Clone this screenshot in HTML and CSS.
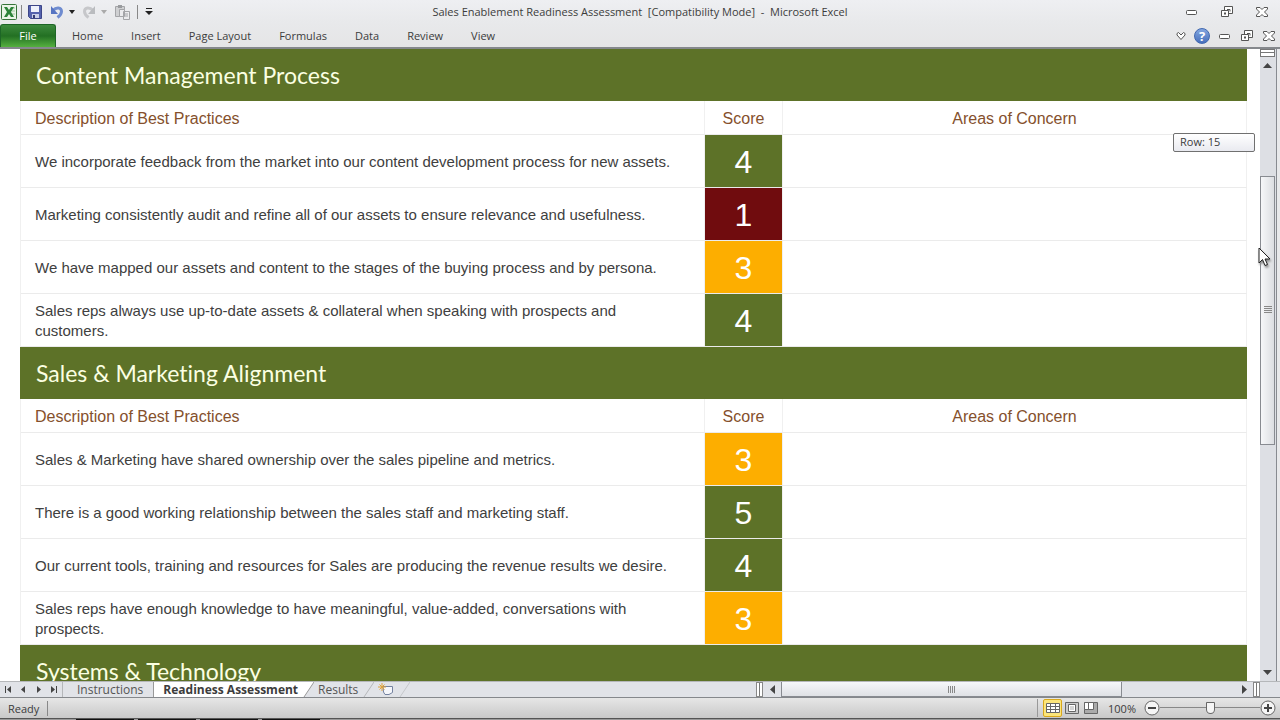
FILE: index.html
```html
<!DOCTYPE html>
<html lang="en">
<head>
  <meta charset="UTF-8">
  <meta name="viewport" content="width=device-width, initial-scale=1.0">
  <title>Sales Enablement Readiness Assessment</title>
  <link rel="stylesheet" href="styles.css">
</head>
<body>
  <!-- Shared icons -->
  <svg class="sprite" aria-hidden="true">
    <symbol id="minimize" viewBox="0 0 14 12"><rect x="1.5" y="4.5" width="10" height="4" rx="1" fill="#fff" stroke="#555"/></symbol>
    <symbol id="restore" viewBox="0 0 14 12">
      <path d="M4.500 .5h8v7h-8z" fill="#fff" stroke="#555"/>
      <path d="M1.500 4.500h7v6h-7z" fill="#fff" stroke="#555"/>
      <path d="M4 7.500h2" stroke="#555" stroke-width="2"/>
      <path d="M7 3.500h3v2" fill="none" stroke="#555"/>
    </symbol>
    <symbol id="close" viewBox="0 0 14 12"><path d="M1.500 1.500h3.500l2 2 2-2h3.500v1.500l-3 3 3 3v1.500H9l-2-2-2 2H1.500V9l3-3-3-3z" fill="#fff" stroke="#555"/></symbol>
  </svg>

  <!-- Title bar -->
  <header class="title-bar">
    <div class="quick-access">
      <svg width="18" height="18" viewBox="0 0 18 18">
        <rect x="1.500" y="1.500" width="15" height="15" rx="1" fill="#e9f4e7" stroke="#37743a"/>
        <path d="M12 5h3M12 8h3M12 11h3" stroke="#9fc79d"/>
        <path d="M4 4h3l2 3 2-3h3l-3 5 3 5h-3l-2-3-2 3H4l3-5z" fill="#2c8339"/>
      </svg>
      <span class="separator first"></span>
      <button type="button" aria-label="Save">
        <svg width="16" height="16" viewBox="0 0 16 16">
          <path d="M1.500 1.500h13v13h-11l-2-2z" fill="#5462ad" stroke="#3d4688"/>
          <path d="M4 2h8v6H4z" fill="#eef1fb"/>
          <path d="M5 10h7v4H5z" fill="#c9cfe8"/>
          <path d="M6 11h2v3H6z" fill="#343b70"/>
        </svg>
      </button>
      <button type="button" class="undo" aria-label="Undo">
        <svg width="14" height="14" viewBox="0 0 14 14">
          <path d="M3 5.500C6 2 11.500 2 11.500 6.500c0 3-2 4.500-4 6" fill="none" stroke="#6f8cd0" stroke-width="3"/>
          <path d="M1 1v8h7z" fill="#5674c2"/>
        </svg>
        <svg width="6" height="4" viewBox="0 0 6 4"><path d="M0 0h6L3 4z" fill="#222"/></svg>
      </button>
      <button type="button" class="undo" aria-label="Redo">
        <svg width="14" height="14" viewBox="0 0 14 14">
          <path d="M11 5.500C8 2 2.500 2 2.500 6.500c0 3 2 4.500 4 6" fill="none" stroke="#c6c7ca" stroke-width="3"/>
          <path d="M13 1v8H6z" fill="#babcbf"/>
        </svg>
        <svg width="6" height="4" viewBox="0 0 6 4"><path d="M0 0h6L3 4z" fill="#aaa"/></svg>
      </button>
      <button type="button" aria-label="Paste">
        <svg width="16" height="16" viewBox="0 0 16 16">
          <path d="M1.500 2.500h9v10h-9z" fill="#cfd0d2" stroke="#a4a5a8"/>
          <path d="M4 1h4v3H4z" fill="#999b9e"/>
          <path d="M5.500 5.500h5v7h-5zM9.500 7.500h6v8h-6z" fill="#ececee" stroke="#a4a5a8"/>
          <path d="M11 10h3M11 12h3" stroke="#a4a5a8"/>
        </svg>
      </button>
      <span class="separator"></span>
      <button type="button" aria-label="Customize Quick Access Toolbar">
        <svg width="8" height="7" viewBox="0 0 8 7"><path d="M1 .5h6" stroke="#222"/><path d="M0 3h8L4 7z" fill="#222"/></svg>
      </button>
    </div>
    <h1>Sales Enablement Readiness Assessment&nbsp; [Compatibility Mode]&nbsp; -&nbsp; Microsoft Excel</h1>
    <div class="window-buttons">
      <button type="button" aria-label="Minimize"><svg width="14" height="12"><use href="#minimize"/></svg></button>
      <button type="button" aria-label="Restore"><svg width="14" height="12"><use href="#restore"/></svg></button>
      <button type="button" aria-label="Close"><svg width="14" height="12"><use href="#close"/></svg></button>
    </div>
  </header>

  <!-- Ribbon tabs -->
  <nav class="ribbon">
    <button type="button" class="file-tab">File</button>
    <div class="ribbon-tabs">
      <button type="button">Home</button>
      <button type="button">Insert</button>
      <button type="button">Page Layout</button>
      <button type="button">Formulas</button>
      <button type="button">Data</button>
      <button type="button">Review</button>
      <button type="button">View</button>
    </div>
    <div class="workbook-buttons">
      <button type="button" aria-label="Expand the Ribbon"><svg width="10" height="10" viewBox="0 0 10 10"><path d="M1 2.500 2.500 1.500 5 4l2.500-2.500L9 2.500V4L5 8.500 1 4z" fill="#fff" stroke="#555"/></svg></button>
      <button type="button" class="help" aria-label="Help">?</button>
      <button type="button" aria-label="Minimize workbook"><svg width="14" height="12"><use href="#minimize"/></svg></button>
      <button type="button" aria-label="Restore workbook"><svg width="14" height="12"><use href="#restore"/></svg></button>
      <button type="button" aria-label="Close workbook"><svg width="14" height="12"><use href="#close"/></svg></button>
    </div>
  </nav>

  <main class="workspace">
    <div class="sheet">
      <section>
        <h2>Content Management Process</h2>
        <table>
          <thead>
            <tr><th class="practice">Description of Best Practices</th><th class="score">Score</th><th class="concern">Areas of Concern</th></tr>
          </thead>
          <tbody>
            <tr><td>We incorporate feedback from the market into our content development process for new assets.</td><td class="score green">4</td><td></td></tr>
            <tr><td>Marketing consistently audit and refine all of our assets to ensure relevance and usefulness.</td><td class="score red">1</td><td></td></tr>
            <tr><td>We have mapped our assets and content to the stages of the buying process and by persona.</td><td class="score orange">3</td><td></td></tr>
            <tr><td>Sales reps always use up-to-date assets &amp; collateral when speaking with prospects and customers.</td><td class="score green">4</td><td></td></tr>
          </tbody>
        </table>
      </section>

      <section>
        <h2>Sales &amp; Marketing Alignment</h2>
        <table>
          <thead>
            <tr><th class="practice">Description of Best Practices</th><th class="score">Score</th><th class="concern">Areas of Concern</th></tr>
          </thead>
          <tbody>
            <tr><td>Sales &amp; Marketing have shared ownership over the sales pipeline and metrics.</td><td class="score orange">3</td><td></td></tr>
            <tr><td>There is a good working relationship between the sales staff and marketing staff.</td><td class="score green">5</td><td></td></tr>
            <tr><td>Our current tools, training and resources for Sales are producing the revenue results we desire.</td><td class="score green">4</td><td></td></tr>
            <tr><td>Sales reps have enough knowledge to have meaningful, value-added, conversations with prospects.</td><td class="score orange">3</td><td></td></tr>
          </tbody>
        </table>
      </section>

      <section>
        <h2>Systems &amp; Technology</h2>
      </section>
    </div>

    <!-- Vertical scroll bar -->
    <div class="v-scroll">
      <span class="v-split"></span>
      <button type="button" aria-label="Scroll up"><svg width="9" height="5" viewBox="0 0 9 5"><path d="M0 5h9L4.500 0z" fill="#444"/></svg></button>
      <div class="v-track">
        <div class="v-thumb"><svg width="8" height="8" viewBox="0 0 8 8"><path d="M0 .5h8M0 2.500h8M0 4.500h8M0 6.500h8" stroke="#888"/></svg></div>
      </div>
      <button type="button" aria-label="Scroll down"><svg width="9" height="5" viewBox="0 0 9 5"><path d="M0 0h9L4.500 5z" fill="#444"/></svg></button>
    </div>
    <div class="row-tip">Row: 15</div>
    <svg class="cursor" width="13" height="20" viewBox="0 0 13 20"><path d="M1 1v15l3.500-3.500L7 18.500l2.500-1L7 12h5z" fill="#fff" stroke="#222"/></svg>
  </main>

  <!-- Sheet tabs and horizontal scroll bar -->
  <div class="sheet-bar">
    <div class="sheet-nav">
      <button type="button" aria-label="First sheet"><svg width="7" height="7" viewBox="0 0 7 7"><path d="M.5 0v7" stroke="#444"/><path d="M6 0v7L2 3.500z" fill="#444"/></svg></button>
      <button type="button" aria-label="Previous sheet"><svg width="7" height="7" viewBox="0 0 7 7"><path d="M5 0v7L1 3.500z" fill="#444"/></svg></button>
      <button type="button" aria-label="Next sheet"><svg width="7" height="7" viewBox="0 0 7 7"><path d="M2 0v7l4-3.500z" fill="#444"/></svg></button>
      <button type="button" aria-label="Last sheet"><svg width="7" height="7" viewBox="0 0 7 7"><path d="M6.500 0v7" stroke="#444"/><path d="M1 0v7l4-3.500z" fill="#444"/></svg></button>
    </div>
    <div class="sheet-tabs">
      <button type="button">Instructions</button>
      <button type="button" class="active">Readiness Assessment</button>
      <svg class="slant" width="12" height="16" viewBox="0 0 12 16"><path d="M0 0h12L2 15H0z" fill="#fff"/><path d="M12 0 2 15" stroke="#999"/></svg>
      <button type="button" class="results">Results</button>
      <svg class="slant" width="12" height="16" viewBox="0 0 12 16"><path d="M12 0 2 15" stroke="#b5b7ba"/></svg>
      <button type="button" class="new-sheet" aria-label="Insert Worksheet">
        <svg width="16" height="13" viewBox="0 0 16 13">
          <path d="M5 3.500h9.500v6L11 11.500H7L5.500 9z" fill="#f5f6fa" stroke="#7482a0"/>
          <path d="M4 0v8M0 4h8M1.500 1.500l5 5M6.500 1.500l-5 5" stroke="#dfa33c"/>
        </svg>
      </button>
      <svg class="slant" width="12" height="16" viewBox="0 0 12 16"><path d="M12 0 2 15" stroke="#c5c7cb"/></svg>
    </div>
    <div class="h-scroll">
      <span class="h-split"></span>
      <button type="button" aria-label="Scroll left"><svg width="5" height="9" viewBox="0 0 5 9"><path d="M5 0v9L0 4.500z" fill="#444"/></svg></button>
      <div class="h-track">
        <div class="h-thumb"><svg width="8" height="7" viewBox="0 0 8 7"><path d="M.5 0v7M2.500 0v7M4.500 0v7M6.500 0v7" stroke="#888"/></svg></div>
      </div>
      <button type="button" aria-label="Scroll right"><svg width="5" height="9" viewBox="0 0 5 9"><path d="M0 0v9l5-4.500z" fill="#444"/></svg></button>
      <span class="h-split"></span>
    </div>
  </div>

  <!-- Status bar -->
  <footer class="status-bar">
    <span class="ready">Ready</span>
    <div class="view-buttons">
      <button type="button" class="active" aria-label="Normal"><svg width="14" height="12" viewBox="0 0 14 12"><path d="M.5 1.500h13v9H.5zM.5 4.500h13M.5 7.500h13M4.500 1.500v9M9.500 1.500v9" fill="#fff" stroke="#666"/></svg></button>
      <button type="button" aria-label="Page Layout"><svg width="14" height="12" viewBox="0 0 14 12"><path d="M.5 .5h13v11H.5z" fill="#ccc" stroke="#666"/><path d="M3.500 2.500h7v7h-7z" fill="#fff" stroke="#666"/><path d="M5 5h4M5 7h4" stroke="#aaa"/></svg></button>
      <button type="button" aria-label="Page Break Preview"><svg width="14" height="12" viewBox="0 0 14 12"><path d="M.5 .5h13v11H.5z" fill="#aaa" stroke="#666"/><path d="M.5 .5h4v7h-4zM4.500 .5h5v7h-5z" fill="#fff" stroke="#666"/></svg></button>
    </div>
    <span class="zoom-level">100%</span>
    <button type="button" aria-label="Zoom out"><svg width="16" height="16" viewBox="0 0 16 16"><circle cx="8" cy="8" r="7" fill="#f5f5f5" stroke="#666"/><path d="M4 8h8" stroke="#444" stroke-width="2"/></svg></button>
    <input type="range" min="0" max="100" value="50" aria-label="Zoom">
    <button type="button" aria-label="Zoom in"><svg width="16" height="16" viewBox="0 0 16 16"><circle cx="8" cy="8" r="7" fill="#f5f5f5" stroke="#666"/><path d="M4 8h8M8 4v8" stroke="#444" stroke-width="2"/></svg></button>
  </footer>

  <!-- Top edge of the taskbar buttons -->
  <div class="taskbar">
    <span></span>
    <span></span>
    <span></span>
    <span></span>
  </div>
</body>
</html>
```

FILE: styles.css
```css
* {
  box-sizing: border-box;
}

body {
  margin: 0;
  height: 100vh;
  display: flex;
  flex-direction: column;
  overflow: hidden;
  font-family: "Open Sans", "Noto Sans", sans-serif;
  font-size: 11px;
  color: #3c3c3c;
  background-color: #e6e7e9;
}

button {
  display: flex;
  align-items: center;
  justify-content: center;
  padding: 0;
  border: none;
  background: none;
  font: inherit;
  color: inherit;
  cursor: pointer;
}

svg {
  display: block;
  flex-shrink: 0;
}

.sprite {
  position: absolute;
  width: 0;
  height: 0;
}

/* Title bar */
.title-bar {
  display: grid;
  grid-template-columns: 1fr auto 1fr;
  align-items: center;
  height: 23px;
  background: linear-gradient(#eeeff2, #e8e9eb);
}

.quick-access {
  display: flex;
  align-items: center;
  gap: 7px;
}

.separator {
  width: 1px;
  height: 14px;
  background-color: #888;
}

.separator.first {
  margin: 0 -2px 0 -4px;
}

.undo {
  gap: 5px;
}

.title-bar h1 {
  margin: 0;
  font-size: 11px;
  font-weight: normal;
}

.window-buttons {
  display: flex;
  justify-content: flex-end;
  gap: 21px;
  padding-right: 11px;
}

/* Ribbon */
.ribbon {
  display: flex;
  height: 26px;
  padding-top: 1px;
  background: linear-gradient(#e8e9eb, #e5e5e6);
  border-bottom: 2px solid #85888c;
}

.file-tab {
  width: 56px;
  padding-bottom: 1px;
  color: #fff;
  background: linear-gradient(#3d8a3e, #237023 50%, #55b03f);
  border: 1px solid #1d6626;
  border-bottom: none;
  border-radius: 3px 3px 0 0;
}

.ribbon-tabs {
  display: flex;
  flex: 1;
  padding-left: 2px;
}

.ribbon-tabs button {
  padding: 0 14px;
}

.workbook-buttons {
  display: flex;
  align-items: center;
  gap: 8px;
  padding-right: 4px;
}

.help {
  width: 16px;
  height: 16px;
  border: 1px solid #4168b0;
  border-radius: 50%;
  background: linear-gradient(#82a5df, #4770bd);
  color: #fff;
  font-size: 13px;
  font-weight: bold;
}

/* Worksheet */
.workspace {
  position: relative;
  display: flex;
  flex: 1;
  min-height: 0;
}

.sheet {
  flex: 1;
  overflow: hidden;
  padding: 0 13px 0 20px;
  background-color: #fff;
  font-family: "Liberation Sans", Arial, sans-serif;
  font-size: 15px;
  line-height: 20px;
}

.sheet h2 {
  margin: 0;
  height: 52px;
  padding: 0 16px;
  background-color: #5d7228;
  color: #fbffe2;
  font-family: Lato, sans-serif;
  font-size: 23px;
  font-weight: normal;
  font-variant-ligatures: none;
  line-height: 52px;
}

table {
  width: 100%;
  table-layout: fixed;
  border-collapse: separate;
  border-spacing: 0;
  border-left: 1px solid #f0f0f0;
}

th,
td {
  padding: 2px 24px 0 14px;
  border-right: 1px solid #f0f0f0;
  border-bottom: 1px solid #ebebeb;
}

th {
  height: 34px;
  color: #85502c;
  font-size: 16px;
  font-weight: normal;
}

td {
  height: 53px;
  color: #404040;
}

.practice {
  text-align: left;
}

.score {
  width: 78px;
  padding: 2px 0 0;
  text-align: center;
}

.concern {
  width: 464px;
  padding: 2px 0 0;
}

td.score {
  background-clip: padding-box;
  color: #fff;
  font-size: 32px;
}

.green {
  background-color: #5d7228;
}

.red {
  background-color: #700c0e;
}

.orange {
  background-color: #fdae00;
}

/* Vertical scroll bar */
.v-scroll {
  display: flex;
  flex-direction: column;
  width: 20px;
  padding-right: 3px;
  background: linear-gradient(to right, #dddfe4 16px, #888b91 16px, #888b91 17px, #e8e9eb 17px);
}

.v-split {
  width: 15px;
  height: 8px;
  border: 1px solid #777;
  background: linear-gradient(#fff 2px, #777 2px, #777 3px, #fff 3px) no-repeat;
}

.v-scroll button {
  width: 15px;
  height: 17px;
}

.v-track {
  display: flex;
  flex-direction: column;
  flex: 1;
}

.v-track::before {
  content: "";
  flex: 102;
}

.v-track::after {
  content: "";
  flex: 220;
}

.v-thumb {
  display: flex;
  align-items: center;
  justify-content: center;
  flex: 268;
  width: 15px;
  border: 1px solid #888b91;
  background: linear-gradient(to right, #f6f7f9, #dcdee2);
}

.row-tip {
  position: absolute;
  top: 84px;
  right: 25px;
  width: 82px;
  height: 19px;
  padding-left: 6px;
  border: 1px solid #707070;
  border-radius: 2px;
  background: linear-gradient(#fff, #e9eaf0);
  line-height: 16px;
}

.cursor {
  position: absolute;
  top: 198px;
  right: 9px;
  filter: drop-shadow(1px 2px 1px #888);
}

/* Sheet tabs */
.sheet-bar {
  display: flex;
  height: 17px;
  padding-right: 20px;
  border-top: 1px solid #b5b7ba;
  border-bottom: 1px solid #85888c;
  background-color: #e1e3e8;
}

.sheet-nav {
  display: flex;
  align-items: center;
  gap: 8px;
  padding: 0 5px;
  border-right: 1px solid #b5b7ba;
}

.sheet-tabs {
  display: flex;
  flex: 1;
  font-size: 12px;
  line-height: 15px;
}

.sheet-tabs button {
  padding: 0 10px 0 14px;
  color: #555;
}

.sheet-tabs .active {
  padding: 0 4px 0 9px;
  border-left: 1px solid #999;
  background-color: #fff;
  color: #3c3c3c;
  font-weight: bold;
}

.sheet-tabs .results {
  padding: 0 4px;
}

.sheet-tabs .new-sheet {
  padding: 0 4px;
}

.h-scroll {
  display: flex;
  width: 40%;
}

.h-split {
  width: 7px;
  border: 1px solid #888;
  background: linear-gradient(to right, #fff 2px, #777 2px, #777 3px, #fff 3px) no-repeat;
}

.h-scroll button {
  width: 18px;
}

.h-track {
  display: flex;
  flex: 1;
}

.h-track::after {
  content: "";
  flex: 1;
}

.h-thumb {
  display: flex;
  align-items: center;
  justify-content: center;
  flex: 3;
  border: 1px solid #888b91;
  border-top: none;
  background: linear-gradient(#f6f7fa, #dfe1e5);
}

/* Status bar */
.status-bar {
  display: flex;
  align-items: center;
  height: 21px;
  padding-right: 4px;
  border-bottom: 1px solid #555;
  background: linear-gradient(#e6e6e6, #c9c9c9);
}

.ready {
  padding: 0 8px;
  border-right: 1px solid #888;
}

.view-buttons {
  display: flex;
  margin-left: auto;
  padding-left: 5px;
  border-left: 1px solid #999;
}

.view-buttons button {
  width: 19px;
  height: 18px;
}

.view-buttons .active {
  border: 1px solid #d9a81c;
  border-radius: 2px;
  background-color: #fce57a;
}

.zoom-level {
  padding: 0 8px;
}

.status-bar input {
  width: 100px;
  height: 16px;
  margin: 0;
  appearance: none;
  background: linear-gradient(transparent 7px, #888 7px, #888 8px, transparent 8px);
}

.status-bar input::-webkit-slider-thumb {
  appearance: none;
  width: 9px;
  height: 12px;
  border: 1px solid #666;
  border-radius: 1px 1px 5px 5px;
  background-color: #f5f5f5;
}

.taskbar {
  display: flex;
  gap: 4px;
  height: 1px;
  padding-left: 76px;
  background-color: #9a9a9a;
}

.taskbar span {
  width: 58px;
  background-color: #111;
}
```
